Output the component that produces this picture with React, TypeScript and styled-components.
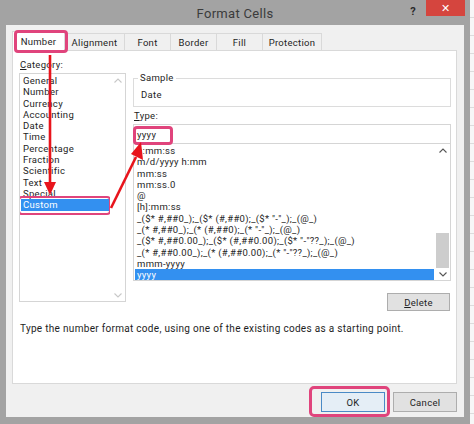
import React from "react";
import styled, { createGlobalStyle, css } from "styled-components";

const GlobalStyle = createGlobalStyle`
  html, body {
    margin: 0;
    padding: 0;
  }
  body {
    width: 474px;
    height: 424px;
    overflow: hidden;
    background: #f3f3f3;
    font-family: Roboto, "Open Sans", sans-serif;
    letter-spacing: 0.3px;
    color: #1e1e1e;
  }
`;

const PINK = "#e0447c";

const Screen = styled.div`
  position: relative;
  display: flex;
  width: 474px;
  height: 424px;
`;

const Window = styled.div`
  width: 470px;
  height: 424px;
  box-sizing: border-box;
  padding: 0 6px 7px 6px;
  background: #a3a3a3;
  display: flex;
  flex-direction: column;
`;

const SheetEdge = styled.div`
  flex: 1;
  background: repeating-linear-gradient(
    to bottom,
    #f7f7f7 0px,
    #f7f7f7 17px,
    #dcdcdc 17px,
    #dcdcdc 18px
  );
`;

const TitleBar = styled.div`
  height: 25px;
  display: grid;
  grid-template-columns: 1fr auto 1fr;
  align-items: center;
`;

const Title = styled.div`
  font-size: 13px;
  color: #3b3b3b;
  padding-top: 1px;
`;

const TitleControls = styled.div`
  display: flex;
  justify-content: flex-end;
  align-self: start;
  margin-right: -1px;
`;

const Help = styled.div`
  font-size: 11px;
  font-weight: 700;
  color: #2a2a2a;
  margin: 5px 10px 0 0;
`;

const Close = styled.div`
  width: 39px;
  height: 16px;
  background: #d5453e;
  color: #fff;
  font-size: 11px;
  display: flex;
  align-items: center;
  justify-content: center;
`;

const Body = styled.div`
  flex: 1;
  background: #f0f0f0;
  padding: 7px 7px 0 6px;
  display: flex;
  flex-direction: column;
`;

const TabStrip = styled.div`
  display: flex;
  height: 18px;
  align-items: flex-end;
  position: relative;
  z-index: 1;
`;

const Tab = styled.div<{ $w: number; $active?: boolean }>`
  width: ${(p) => p.$w}px;
  height: 17px;
  box-sizing: border-box;
  border: 1px solid #d9d9d9;
  border-bottom: none;
  margin-right: -1px;
  background: #f0f0f0;
  font-size: 9.5px;
  display: flex;
  align-items: center;
  justify-content: center;
  ${(p) =>
    p.$active &&
    css`
      height: 20px;
      margin-bottom: -1px;
      background: #fff;
      position: relative;
      &::after {
        content: "";
        position: absolute;
        left: 1px;
        right: -4px;
        top: -2px;
        bottom: -2px;
        border: 3px solid ${PINK};
        border-radius: 4px;
      }
    `}
`;

const Panel = styled.div`
  height: 334px;
  box-sizing: border-box;
  background: #fff;
  border: 1px solid #d9d9d9;
  padding: 7px 6px 0 6px;
  display: flex;
  flex-direction: column;
`;

const Columns = styled.div`
  display: grid;
  grid-template-columns: 107px 318px;
  column-gap: 7px;
`;

const Column = styled.div`
  display: flex;
  flex-direction: column;
`;

const Label = styled.div`
  font-size: 9.5px;
  height: 15px;
  line-height: 13px;
  padding-left: 1px;
  u {
    text-decoration: underline;
  }
`;

const ListBox = styled.div<{ $h: number }>`
  height: ${(p) => p.$h}px;
  box-sizing: border-box;
  border: 1px solid #d5d5d5;
  display: flex;
  background: #fff;
`;

const Items = styled.div`
  flex: 1;
  padding: 1px 1px 0 1px;
  overflow: hidden;
`;

const Item = styled.div<{ $selected?: boolean; $marked?: boolean }>`
  height: 11.3px;
  line-height: 11.3px;
  font-size: 9.5px;
  padding-left: 2px;
  white-space: nowrap;
  position: relative;
  ${(p) =>
    p.$selected &&
    css`
      background: #3390f0;
      color: #fff;
    `}
  ${(p) =>
    p.$marked &&
    css`
      &::after {
        content: "";
        position: absolute;
        left: -3px;
        right: -2px;
        top: -3px;
        bottom: -4px;
        border: 2.5px solid ${PINK};
        border-radius: 4px;
      }
    `}
`;

const ScrollBar = styled.div<{ $disabled?: boolean }>`
  width: 15px;
  display: flex;
  flex-direction: column;
  align-items: center;
  justify-content: space-between;
  padding: 4px 0 3px;
  color: ${(p) => (p.$disabled ? "#c8c8c8" : "#555")};
`;

const Thumb = styled.div`
  width: 13px;
  height: 35px;
  background: #cdcdcd;
  margin-top: auto;
  margin-bottom: 4px;
`;

const Chevron = ({ up }: { up?: boolean }) => (
  <svg width="8" height="5" viewBox="0 0 8 5">
    <path
      d={up ? "M0.5 4.5 L4 1 L7.5 4.5" : "M0.5 0.5 L4 4 L7.5 0.5"}
      fill="none"
      stroke="currentColor"
      strokeWidth="1.1"
    />
  </svg>
);

const SampleBox = styled.fieldset`
  margin: 15px 0 0 0;
  padding: 0 0 0 6px;
  height: 34px;
  box-sizing: border-box;
  border: 1px solid #dcdcdc;
  font-size: 9.5px;
  legend {
    padding: 0 2px;
    margin-left: -2px;
    line-height: 10px;
  }
`;

const SampleValue = styled.div`
  padding-top: 6px;
  padding-left: 1px;
`;

const TypeLabel = styled(Label)`
  margin-top: 2px;
`;

const TypeInput = styled.div`
  height: 19px;
  box-sizing: border-box;
  border: 1px solid #d5d5d5;
  border-bottom: none;
  font-size: 9.5px;
  display: flex;
  align-items: center;
`;

const TypeValue = styled.span`
  position: relative;
  padding-left: 3px;
  &::after {
    content: "";
    position: absolute;
    left: -1px;
    right: -17px;
    top: -3px;
    bottom: -5px;
    border: 3px solid ${PINK};
    border-radius: 4px;
  }
`;

const Button = styled.div<{ $w: number; $h: number; $focus?: boolean }>`
  width: ${(p) => p.$w}px;
  height: ${(p) => p.$h}px;
  box-sizing: border-box;
  border: 1px solid ${(p) => (p.$focus ? "#4a8ac6" : "#adadad")};
  background: ${(p) => (p.$focus ? "#e5eef6" : "#e1e1e1")};
  font-size: 9.5px;
  display: flex;
  align-items: center;
  justify-content: center;
  position: relative;
`;

const Marked = styled.div`
  position: relative;
  &::after {
    content: "";
    position: absolute;
    left: -12px;
    right: -5px;
    top: -6px;
    bottom: -5px;
    border: 3px solid ${PINK};
    border-radius: 5px;
  }
`;

const DeleteRow = styled.div`
  display: flex;
  justify-content: flex-end;
  margin-top: 12px;
  padding-right: 1px;
`;

const Description = styled.div`
  font-size: 10px;
  margin-top: 12px;
  padding-left: 1px;
`;

const Footer = styled.div`
  display: flex;
  justify-content: flex-end;
  gap: 8px;
  padding-top: 8px;
`;

const Arrows = styled.svg`
  position: absolute;
  left: 0;
  top: 0;
  pointer-events: none;
`;

const categories = [
  "General",
  "Number",
  "Currency",
  "Accounting",
  "Date",
  "Time",
  "Percentage",
  "Fraction",
  "Scientific",
  "Text",
  "Special",
  "Custom",
];

const formats = [
  "h:mm:ss",
  "m/d/yyyy h:mm",
  "mm:ss",
  "mm:ss.0",
  "@",
  "[h]:mm:ss",
  '_($* #,##0_);_($* (#,##0);_($* "-"_);_(@_)',
  '_(* #,##0_);_(* (#,##0);_(* "-"_);_(@_)',
  '_($* #,##0.00_);_($* (#,##0.00);_($* "-"??_);_(@_)',
  '_(* #,##0.00_);_(* (#,##0.00);_(* "-"??_);_(@_)',
  "mmm-yyyy",
  "yyyy",
];

const tabs: [string, number][] = [
  ["Number", 53],
  ["Alignment", 61],
  ["Font", 47],
  ["Border", 47],
  ["Fill", 47],
  ["Protection", 60],
];

export default function App() {
  return (
    <>
      <GlobalStyle />
      <Screen>
        <Window>
          <TitleBar>
            <div />
            <Title>Format Cells</Title>
            <TitleControls>
              <Help>?</Help>
              <Close>✕</Close>
            </TitleControls>
          </TitleBar>
          <Body>
            <TabStrip>
              {tabs.map(([name, w], i) => (
                <Tab key={name} $w={w} $active={i === 0}>
                  {name}
                </Tab>
              ))}
            </TabStrip>
            <Panel>
              <Columns>
                <Column>
                  <Label>
                    <u>C</u>ategory:
                  </Label>
                  <ListBox $h={229}>
                    <Items>
                      {categories.map((c) => (
                        <Item
                          key={c}
                          $selected={c === "Custom"}
                          $marked={c === "Custom"}
                        >
                          {c}
                        </Item>
                      ))}
                    </Items>
                    <ScrollBar $disabled>
                      <Chevron up />
                      <Chevron />
                    </ScrollBar>
                  </ListBox>
                </Column>
                <Column>
                  <SampleBox>
                    <legend>Sample</legend>
                    <SampleValue>Date</SampleValue>
                  </SampleBox>
                  <TypeLabel>
                    <u>T</u>ype:
                  </TypeLabel>
                  <TypeInput>
                    <TypeValue>yyyy</TypeValue>
                  </TypeInput>
                  <ListBox $h={138}>
                    <Items>
                      {formats.map((f) => (
                        <Item key={f} $selected={f === "yyyy"}>
                          {f}
                        </Item>
                      ))}
                    </Items>
                    <ScrollBar>
                      <Chevron up />
                      <Thumb />
                      <Chevron />
                    </ScrollBar>
                  </ListBox>
                  <DeleteRow>
                    <Button $w={63} $h={18}>
                      <span>
                        <u>D</u>elete
                      </span>
                    </Button>
                  </DeleteRow>
                </Column>
              </Columns>
              <Description>
                Type the number format code, using one of the existing codes as a
                starting point.
              </Description>
            </Panel>
            <Footer>
              <Marked>
                <Button $w={64} $h={20} $focus>
                  OK
                </Button>
              </Marked>
              <Button $w={64} $h={20}>
                Cancel
              </Button>
            </Footer>
          </Body>
        </Window>
        <SheetEdge />
        <Arrows width="474" height="424" viewBox="0 0 474 424">
          <g stroke="#e8141c" strokeWidth="2.6" fill="#e8141c">
            <line x1="50" y1="55" x2="50" y2="184" />
            <polygon points="44,182 56,182 50,195" stroke="none" />
            <line x1="111" y1="208" x2="136" y2="157" />
            <polygon points="131,154 143,160 141,142" stroke="none" />
          </g>
        </Arrows>
      </Screen>
    </>
  );
}
